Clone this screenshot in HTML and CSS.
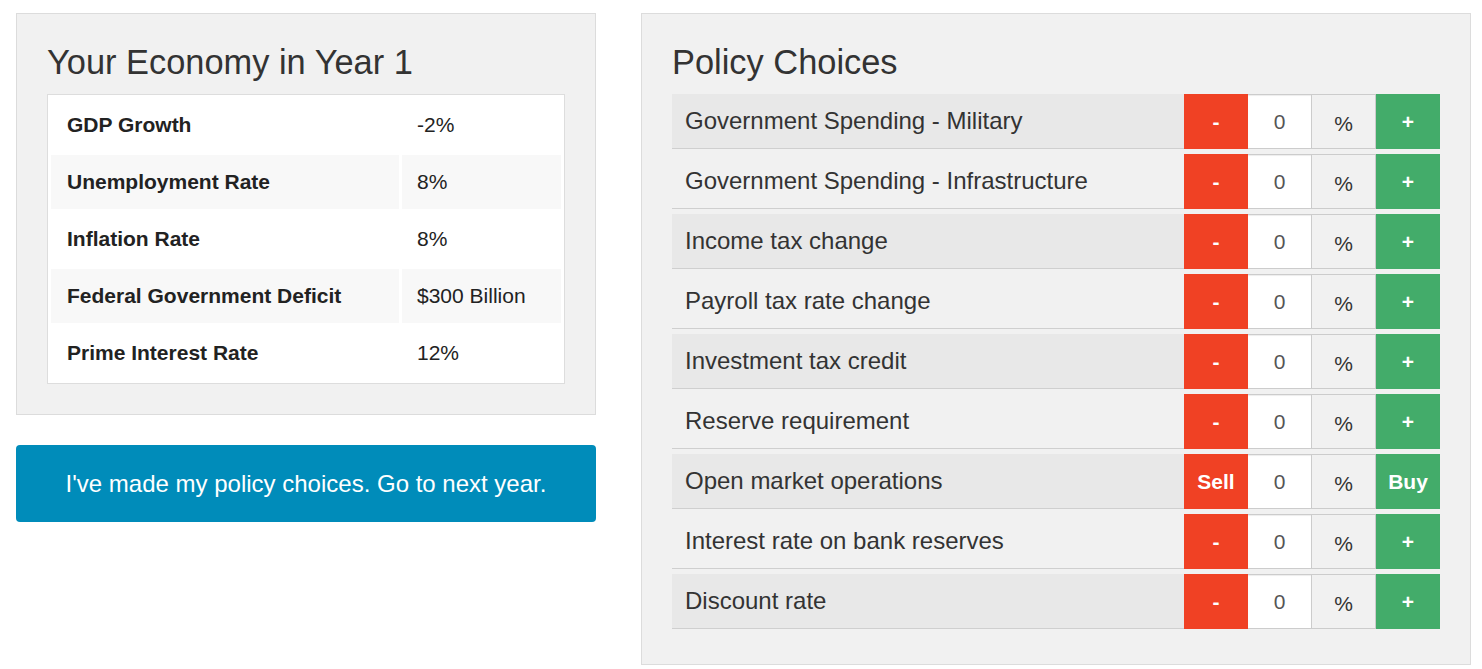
FILE: index.html
```html
<!DOCTYPE html>
<html lang="en">
<head>
  <meta charset="UTF-8" />
  <title>Economy Simulator</title>
  <meta name="viewport" content="width=device-width, initial-scale=1.0" />
  <link rel="stylesheet" href="styles.css">
</head>
<body>

  <div class="page">

    <!-- Left column: current economy -->
    <div class="side">
      <div class="well">
        <h2>Your Economy in Year 1</h2>
        <table class="stats">
          <tr><th>GDP Growth</th><td>-2%</td></tr>
          <tr><th>Unemployment Rate</th><td>8%</td></tr>
          <tr><th>Inflation Rate</th><td>8%</td></tr>
          <tr><th>Federal Government Deficit</th><td>$300 Billion</td></tr>
          <tr><th>Prime Interest Rate</th><td>12%</td></tr>
        </table>
      </div>

      <button class="next-btn">I've made my policy choices. Go to next year.</button>
    </div>

    <!-- Right column: policy controls -->
    <div class="well policy">
      <h2>Policy Choices</h2>

      <div class="choice">
        <div class="label">Government Spending - Military</div>
        <button class="minus">-</button>
        <input type="text" value="0" />
        <span class="unit">%</span>
        <button class="plus">+</button>
      </div>

      <div class="choice">
        <div class="label">Government Spending - Infrastructure</div>
        <button class="minus">-</button>
        <input type="text" value="0" />
        <span class="unit">%</span>
        <button class="plus">+</button>
      </div>

      <div class="choice">
        <div class="label">Income tax change</div>
        <button class="minus">-</button>
        <input type="text" value="0" />
        <span class="unit">%</span>
        <button class="plus">+</button>
      </div>

      <div class="choice">
        <div class="label">Payroll tax rate change</div>
        <button class="minus">-</button>
        <input type="text" value="0" />
        <span class="unit">%</span>
        <button class="plus">+</button>
      </div>

      <div class="choice">
        <div class="label">Investment tax credit</div>
        <button class="minus">-</button>
        <input type="text" value="0" />
        <span class="unit">%</span>
        <button class="plus">+</button>
      </div>

      <div class="choice">
        <div class="label">Reserve requirement</div>
        <button class="minus">-</button>
        <input type="text" value="0" />
        <span class="unit">%</span>
        <button class="plus">+</button>
      </div>

      <div class="choice">
        <div class="label">Open market operations</div>
        <button class="minus">Sell</button>
        <input type="text" value="0" />
        <span class="unit">%</span>
        <button class="plus">Buy</button>
      </div>

      <div class="choice">
        <div class="label">Interest rate on bank reserves</div>
        <button class="minus">-</button>
        <input type="text" value="0" />
        <span class="unit">%</span>
        <button class="plus">+</button>
      </div>

      <div class="choice">
        <div class="label">Discount rate</div>
        <button class="minus">-</button>
        <input type="text" value="0" />
        <span class="unit">%</span>
        <button class="plus">+</button>
      </div>
    </div>

  </div>

</body>
</html>
```

FILE: styles.css
```css
* {
  box-sizing: border-box;
}

body {
  margin: 0;
  background: white;
  color: #333;
  font-family: 'Liberation Sans', Arial, sans-serif;
  font-size: 21px;
  line-height: 1.42857;
}

.page {
  display: flex;
  align-items: flex-start;
  gap: 45px;
  padding: 13px 11px 0 16px;
}

.side {
  width: 580px;
  flex-shrink: 0;
}

/* Wells */
.well {
  background-color: #f1f1f1;
  border: 1px solid #dcdcdc;
  padding: 30px;
}

.well h2 {
  font-size: 34.4px;
  font-weight: normal;
  line-height: 37px;
  color: #333;
  margin: 0 0 13px;
}

/* Stats table */
.stats {
  width: 100%;
  background: white;
  border: 1px solid #ddd;
  border-spacing: 3px;
  color: #222;
}

.stats th,
.stats td {
  height: 54px;
  padding: 12px 15px;
  text-align: left;
  vertical-align: middle;
}

.stats th {
  width: 348px;
  padding-left: 16px;
}

.stats tr:nth-child(even) th,
.stats tr:nth-child(even) td {
  background: #f8f8f8;
}

.next-btn {
  display: block;
  width: 100%;
  margin-top: 30px;
  padding: 22px;
  border: none;
  border-radius: 4px;
  background-color: #008cba;
  color: white;
  font-family: 'Liberation Sans', Arial, sans-serif;
  font-size: 24px;
  line-height: 33px;
  cursor: pointer;
}

/* Policy rows */
.policy {
  width: 830px;
  padding-bottom: 30px;
}

.choice {
  display: flex;
  height: 55px;
  margin-bottom: 5px;
}

.choice .label {
  flex: 1;
  display: flex;
  align-items: center;
  padding-left: 13px;
  font-size: 24px;
  color: #333;
  border-bottom: 1px solid #cfcfcf;
}

.choice:nth-child(even) .label {
  background: #e8e8e8;
}

.choice button {
  width: 64px;
  border: none;
  color: white;
  font-family: 'Liberation Sans', Arial, sans-serif;
  font-size: 21px;
  font-weight: bold;
  cursor: pointer;
}

.minus {
  background-color: #f04124;
}

.plus {
  background-color: #43ac6a;
}

.choice input {
  width: 64px;
  border: 1px solid #ccc;
  border-left: none;
  background: white;
  box-shadow: inset 0 1px 1px rgba(0, 0, 0, 0.075);
  color: #555;
  font-family: 'Liberation Sans', Arial, sans-serif;
  font-size: 21px;
  text-align: center;
  padding: 0;
}

.choice .unit {
  width: 64px;
  display: flex;
  align-items: center;
  justify-content: center;
  padding-top: 4px;
  border: 1px solid #ccc;
  border-left: none;
  background: #f1f1f1;
  color: #333;
}
```
